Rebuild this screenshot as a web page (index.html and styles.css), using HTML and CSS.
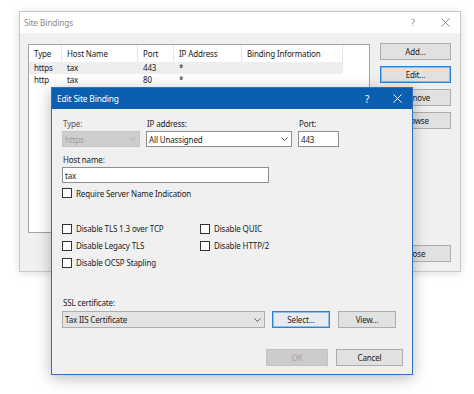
FILE: index.html
```html
<!DOCTYPE html>
<html lang="en">
<head>
<meta charset="utf-8">
<title>Site Bindings</title>
<link rel="stylesheet" href="styles.css">
</head>
<body>
<div class="desktop">
  <section class="win outer">
    <header class="titlebar outer-title">
      <span class="title">Site Bindings</span>
      <span class="caps">
        <span class="cap help">?</span>
        <span class="cap"><svg class="x" width="9" height="9" viewBox="0 0 9 9"><path d="M0.5 0.5L8.5 8.5M8.5 0.5L0.5 8.5"/></svg></span>
      </span>
    </header>
    <div class="outer-body">
      <div class="listview">
        <div class="lv-row lv-header">
          <span>Type</span><span>Host Name</span><span>Port</span><span>IP Address</span><span>Binding Information</span>
        </div>
        <div class="lv-row sel">
          <span>https</span><span>tax</span><span>443</span><span>*</span><span></span>
        </div>
        <div class="lv-row">
          <span>http</span><span>tax</span><span>80</span><span>*</span><span></span>
        </div>
      </div>
      <div class="side-btns">
        <button class="btn">Add...</button>
        <button class="btn focus">Edit...</button>
        <button class="btn">Remove</button>
        <button class="btn">Browse</button>
        <button class="btn push">Close</button>
      </div>
    </div>
  </section>

  <section class="win inner">
    <header class="titlebar inner-title">
      <span class="title">Edit Site Binding</span>
      <span class="caps">
        <span class="cap help">?</span>
        <span class="cap"><svg class="x" width="9" height="9" viewBox="0 0 9 9"><path d="M0.5 0.5L8.5 8.5M8.5 0.5L0.5 8.5"/></svg></span>
      </span>
    </header>
    <div class="inner-body">
      <div class="row1">
        <div class="field">
          <label class="lbl dim">Type:</label>
          <div class="combo disabled"><span>https</span><svg class="chev" width="7" height="4" viewBox="0 0 7 4"><path d="M0.5 0.5L3.5 3.5L6.5 0.5"/></svg></div>
        </div>
        <div class="field">
          <label class="lbl">IP address:</label>
          <div class="combo edit"><span>All Unassigned</span><svg class="chev" width="7" height="4" viewBox="0 0 7 4"><path d="M0.5 0.5L3.5 3.5L6.5 0.5"/></svg></div>
        </div>
        <div class="field">
          <label class="lbl">Port:</label>
          <div class="textbox">443</div>
        </div>
      </div>

      <div class="field host">
        <label class="lbl">Host name:</label>
        <div class="textbox hostbox">tax</div>
      </div>

      <label class="check sni"><span class="box"></span>Require Server Name Indication</label>

      <div class="checks">
        <label class="check"><span class="box"></span>Disable TLS 1.3 over TCP</label>
        <label class="check"><span class="box"></span>Disable QUIC</label>
        <label class="check"><span class="box"></span>Disable Legacy TLS</label>
        <label class="check"><span class="box"></span>Disable HTTP/2</label>
        <label class="check"><span class="box"></span>Disable OCSP Stapling</label>
      </div>

      <div class="field ssl">
        <label class="lbl">SSL certificate:</label>
        <div class="ssl-row">
          <div class="combo list"><span>Tax IIS Certificate</span><svg class="chev" width="7" height="4" viewBox="0 0 7 4"><path d="M0.5 0.5L3.5 3.5L6.5 0.5"/></svg></div>
          <button class="btn focus select">Select...</button>
          <button class="btn view">View...</button>
        </div>
      </div>

      <div class="dlg-btns">
        <button class="btn ok" disabled>OK</button>
        <button class="btn cancel">Cancel</button>
      </div>
    </div>
  </section>
</div>
</body>
</html>
```

FILE: styles.css
```css
* { box-sizing: border-box; }
html, body { margin: 0; padding: 0; }
body {
  width: 474px;
  height: 394px;
  overflow: hidden;
  background: #ffffff;
  font-family: "Noto Sans", "Open Sans", sans-serif;
  font-size: 8px;
  letter-spacing: -0.15px;
  color: #1b1b1b;
}
.desktop { position: relative; width: 474px; height: 394px; }

.win { position: absolute; display: flex; flex-direction: column; }

.titlebar { display: flex; align-items: center; flex: none; }
.caps { margin-left: auto; display: flex; height: 100%; }
.cap { width: 30px; display: flex; align-items: center; justify-content: center; font-size: 9px; }
.x path { stroke: currentColor; stroke-width: 1; fill: none; }

/* outer window */
.outer {
  left: 19px; top: 11px; width: 442px; height: 261px;
  border: 1px solid #c8c8c8;
  background: #f0f0f0;
  box-shadow: 0 1px 8px rgba(0,0,0,0.14);
}
.outer-title { height: 21px; background: #ffffff; color: #8c8c8c; padding-left: 4px; font-size: 8.4px; }
.outer-title .help { margin-right: 2px; }

.outer-body { flex: 1; display: flex; gap: 10px; padding: 10px 8px 9px 8px; }

.listview {
  width: 342px; height: 189px; margin-top: 1px;
  background: #ffffff;
  border: 1px solid #a3a3a3;
}
.lv-row {
  display: grid;
  grid-template-columns: 33px 76px 36px 68px 101px;
  width: 314px;
  height: 12px;
  line-height: 12px;
}
.lv-row span { padding-left: 5px; white-space: nowrap; }
.lv-header { height: 17px; line-height: 17px; }
.lv-header span { border-right: 1px solid #e5e5e5; }
.lv-row.sel { background: #eeeeee; }

.side-btns { width: 71px; display: flex; flex-direction: column; gap: 6px; }
.side-btns .push { margin-top: auto; }

.btn {
  height: 17px;
  padding: 0;
  border: 1px solid #adadad;
  background: #e1e1e1;
  font: inherit;
  letter-spacing: inherit;
  color: #1b1b1b;
  text-align: center;
  line-height: 15px;
}
.btn.focus { border-color: #2a84d8; box-shadow: inset 0 0 0 1px rgba(42,132,216,0.45); }
.btn:disabled { background: #cccccc; border-color: #c2c2c2; color: #a3a3a3; }

/* inner dialog */
.inner {
  left: 51px; top: 87px; width: 362px; height: 288px;
  border: 1px solid #2a72bd;
  background: #f0f0f0;
  box-shadow: 0 3px 14px rgba(0,0,0,0.28);
}
.inner-title { height: 21px; background: #0b5fb1; color: #ffffff; padding-left: 5px; font-size: 8.4px; }
.inner-title .cap { font-size: 10px; }

.inner-body { flex: 1; display: flex; flex-direction: column; padding: 9px 0 0 10px; }

.field { display: flex; flex-direction: column; gap: 1px; }
.lbl { display: block; height: 12px; line-height: 12px; padding-left: 1px; }
.lbl.dim { color: #555555; }

.row1 { display: grid; grid-template-columns: 78px 146px 41px; column-gap: 6px; }

.combo, .textbox {
  height: 16px;
  display: flex;
  align-items: center;
  padding: 0 3px 0 2px;
  white-space: nowrap;
}
.combo span { flex: 1; }
.chev path { fill: none; stroke: #5a5a5a; stroke-width: 1; }
.combo.disabled { background: #cecece; border: 1px solid #c4c4c4; color: #9d9d9d; }
.combo.disabled .chev path { stroke: #a8a8a8; }
.combo.edit, .textbox { background: #ffffff; border: 1px solid #8e8e8e; }

.host { margin-top: 7px; }
.hostbox { width: 207px; }

.check { display: flex; align-items: center; height: 12px; white-space: nowrap; }
.box { width: 10px; height: 10px; border: 1px solid #333333; background: #ffffff; margin-right: 4px; flex: none; }
.sni { margin-top: 4px; }

.checks { margin-top: 21px; display: grid; grid-template-columns: 138px auto; grid-auto-rows: 17px; align-items: center; }

.ssl { margin-top: 26px; gap: 2px; }
.ssl-row { display: flex; }
.combo.list { width: 203px; height: 17px; background: #e3e3e3; border: 1px solid #adadad; }
.select { width: 58px; margin-left: 7px; background: #e8ecf1; }
.view { width: 58px; margin-left: 8px; }

.dlg-btns { margin-top: 21px; display: flex; justify-content: flex-end; gap: 8px; margin-right: 9px; }
.ok { width: 62px; }
.cancel { width: 67px; }
```
